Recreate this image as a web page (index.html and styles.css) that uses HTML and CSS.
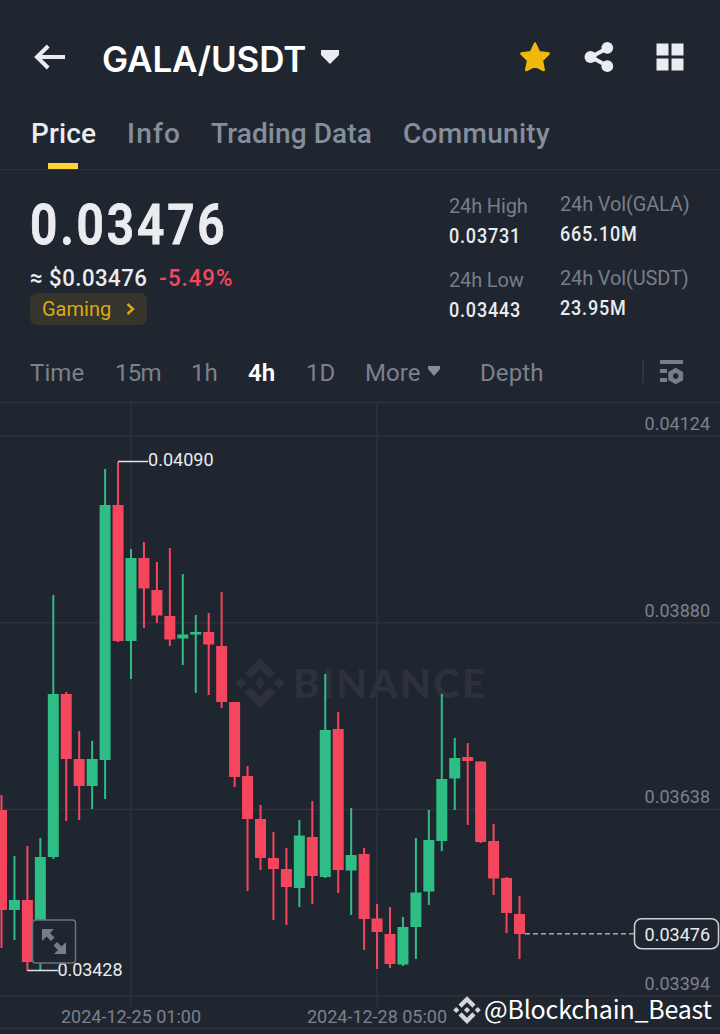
FILE: index.html
```html
<!DOCTYPE html>
<html lang="en">
<head>
<meta charset="utf-8">
<title>GALA/USDT</title>
<link rel="stylesheet" href="styles.css">
</head>
<body>
<div class="app">
  <header class="topbar">
    <svg class="back" width="32" height="26" viewBox="0 0 32 26"><path d="M14.2 2 3 13l11.2 11M3 13h28" fill="none" stroke="#eaecef" stroke-width="4"/></svg>
    <h1 class="pair">GALA/USDT</h1>
    <svg class="caret" width="20" height="16" viewBox="0 0 20 16"><path d="M1 1h18v5l-9 9-9-9z" fill="#eaecef"/></svg>
    <div class="actions">
      <svg width="32" height="32" viewBox="0 0 32 32"><path d="M16 2.7 20 11.3 29.6 12.6 22.8 19.4 24.7 29 16 24.7 7.3 29 9.2 19.4 2.4 12.6 12 11.3z" fill="#f0b90b" stroke="#f0b90b" stroke-width="2.6" stroke-linejoin="round"/></svg>
      <svg width="32" height="32" viewBox="0 0 32 32"><path d="M24.5 7 8 16l16.500 9" fill="none" stroke="#eaecef" stroke-width="4"/><g fill="#eaecef"><circle cx="24.300" cy="6.800" r="5.900"/><circle cx="7.500" cy="16" r="6"/><circle cx="24.300" cy="25.200" r="5.900"/></g></svg>
      <svg width="28" height="28" viewBox="0 0 28 28"><path d="M.5.5h12v12H.5zM15.500.5h12v12h-12zM.5 15.500h12v12H.5zM15.500 15.500h12v12h-12z" fill="#eaecef"/></svg>
    </div>
  </header>
  <nav class="tabs">
    <span class="tab tab-price active">Price</span>
    <span class="tab tab-info">Info</span>
    <span class="tab tab-data">Trading Data</span>
    <span class="tab tab-comm">Community</span>
  </nav>
  <section class="summary">
    <div class="quote">
      <div class="last">0.03476</div>
      <div class="fiat"><span class="usd">≈ $0.03476</span><span class="change">-5.49%</span></div>
      <div class="tag"><span>Gaming</span><svg width="10" height="12" viewBox="0 0 10 12"><path d="M1.500 1 7 6l-5.500 5" fill="none" stroke="#d9aa12" stroke-width="2.400"/></svg></div>
    </div>
    <div class="stats stats-a">
      <div class="label l-high">24h High</div><div class="value">0.03731</div>
      <div class="label l-low">24h Low</div><div class="value">0.03443</div>
    </div>
    <div class="stats stats-b">
      <div class="label l-vg">24h Vol(GALA)</div><div class="value">665.10M</div>
      <div class="label l-vu">24h Vol(USDT)</div><div class="value">23.95M</div>
    </div>
  </section>
  <nav class="ranges">
    <span class="r-time">Time</span>
    <span class="r-15">15m</span>
    <span class="r-1h">1h</span>
    <span class="r-4h on">4h</span>
    <span class="r-1d">1D</span>
    <span class="r-more">More<svg width="14" height="12" viewBox="0 0 14 12"><path d="M1 1h12v3L7 11 1 4z" fill="#848e9c"/></svg></span>
    <span class="r-depth">Depth</span>
    <svg class="settings" width="50" height="30" viewBox="0 0 50 30"><path d="M1 2v24" stroke="#363c47" stroke-width="1.500"/><g fill="#777d8a"><path d="M18 3h23v4H18zM18 12h7v4h-7zM18 21h7v4h-7z"/><path fill-rule="evenodd" d="m33.700 10.800 7.400 4.200v8.200l-7.400 4.100-7.400-4.100V15zM33.700 16.300a2.800 2.800 0 1 0 .01 0z"/></g></svg>
  </nav>
  <main class="chart">
    <svg id="plot" width="720" height="631" viewBox="0 403 720 631">
      <g class="grid"><path d="M0 402.500H720M0 436H720M0 622.700H720M0 809.500H720M0 996H720M0 1028.500H720M131 403V1007M376.900 403V1007"/></g>
      <g class="watermark">
        <g transform="translate(260 683)"><path d="m0-25 15.300 15.200-5.500 5.600L0-14.100l-9.800 9.900-5.500-5.600zM0 25l15.300-15.200-5.500-5.600L0 14.100l-9.800-9.900-5.500 5.600zM0-5.500 5.500 0 0 5.500-5.500 0zM-19.400-5.500-13.900 0l-5.500 5.500L-24.900 0zM19.400-5.500 24.900 0l-5.500 5.500L13.900 0z"/></g>
        <text x="293" y="697.500" textLength="192">BINANCE</text>
      </g>
      <g id="candles"></g>
      <path class="leader" d="M118 461.500H148M27.500 970.500H58"/>
      <path class="lastline" d="M525 933.700H634"/>
      <g class="marks"><text x="148" y="466" textLength="65.500">0.04090</text><text x="57.500" y="976" textLength="65">0.03428</text></g>
      <g class="axis">
        <text x="644.500" y="430" textLength="65.500">0.04124</text>
        <text x="644.500" y="617" textLength="65.500">0.03880</text>
        <text x="644.500" y="803" textLength="65.500">0.03638</text>
        <text x="644.500" y="990" textLength="65.500">0.03394</text>
        <text x="61" y="1023" textLength="140">2024-12-25 01:00</text>
        <text x="307" y="1023" textLength="140">2024-12-28 05:00</text>
      </g>
      <rect class="pricebox" x="634.500" y="918.700" width="84" height="30" rx="7"/>
      <g class="marks"><text x="644.500" y="941" textLength="65.500">0.03476</text></g>
      <g class="expand"><rect x="32.500" y="920" width="43" height="43" rx="3"/><path d="M42 929h12l-4 4 4.500 4.500-3.500 3.500-4.500-4.500L42 941zM66 954V942l-4.500 4.500L57 942l-3.500 3.500 4.500 4.500-4 4z"/></g>
      <g class="credit"><path transform="translate(467 1010) scale(.555)" d="m0-25 15.300 15.200-5.500 5.600L0-14.100l-9.800 9.900-5.500-5.600zM0 25l15.300-15.200-5.500-5.600L0 14.100l-9.800-9.900-5.500 5.600zM0-5.500 5.500 0 0 5.500-5.500 0zM-19.400-5.500-13.900 0l-5.500 5.500L-24.900 0zM19.400-5.500 24.900 0l-5.500 5.500L13.900 0z"/><text x="484" y="1019" textLength="228">@Blockchain_Beast</text></g>
    </svg>
  </main>
</div>
<script src="chart.js"></script>
</body>
</html>
```
FILE: styles.css
```css
* { box-sizing: border-box; }
body { margin: 0; background: #202630; }
.app { width: 720px; height: 1034px; overflow: hidden; background: #202630; color: #eaecef; font-family: Roboto, "Liberation Sans", sans-serif; display: flex; flex-direction: column; }
svg { display: block; flex: none; }
span { white-space: nowrap; }
.topbar { height: 112px; padding: 2px 36px 0 34px; display: flex; align-items: center; }
.back { margin-right: 36px; }
.pair { margin: 3px 0 0; width: 218px; font: 600 35px/44px Inter, sans-serif; letter-spacing: -0.15px; color: #fff; white-space: nowrap; }
.actions { margin-left: auto; display: flex; align-items: center; gap: 32px; }
.actions svg:last-child { margin-left: 9px; }
.tabs { height: 58px; border-bottom: 1px solid #2d333e; padding-left: 31px; display: flex; font: 500 28px/44px Roboto, sans-serif; color: #848e9c; }
.tab { position: relative; }
.tab-price { width: 96px; letter-spacing: .1px; }
.tab-info { width: 84px; letter-spacing: 1.2px; }
.tab-data { width: 192px; letter-spacing: .1px; }
.tab-comm { letter-spacing: .3px; }
.active { color: #eaecef; }
.active::after { content: ""; position: absolute; left: 17px; top: 51px; width: 30px; height: 6px; background: #fcd535; }
.summary { height: 172px; padding-left: 30px; display: flex; }
.quote { width: 419px; padding-top: 27px; }
.last { font-size: 56px; line-height: 56px; font-weight: 600; letter-spacing: 3.3px; transform: scaleX(.855); transform-origin: left; -webkit-text-stroke: .9px #eaecef; }
.fiat { display: flex; gap: 13px; height: 31px; margin-top: 9px; font-size: 24px; line-height: 32px; font-weight: 500; letter-spacing: .5px; transform: scaleX(.925); transform-origin: left; }
.change { color: #f6465d; letter-spacing: 1.100px; }
.tag { width: 117px; height: 32px; border-radius: 7px; background: #35342d; color: #d9aa12; padding: 0 11px 0 12px; display: flex; align-items: center; justify-content: space-between; font-size: 20px; }
.stats-a { width: 111px; padding-top: 23px; }
.stats-b { padding-top: 21px; }
.label { font-size: 20px; line-height: 26px; letter-spacing: -.15px; color: #777e8b; white-space: nowrap; }
.value { font-size: 20px; line-height: 34px; height: 32px; font-weight: 500; letter-spacing: .9px; margin-bottom: 16px; transform: scaleX(.9); transform-origin: left; }
.ranges { height: 61px; padding-left: 30px; display: flex; font-size: 24px; line-height: 62px; color: #7b818e; letter-spacing: .1px; }
.r-time { width: 85px; }
.r-15 { width: 76px; letter-spacing: -.8px; }
.r-1h { width: 57px; }
.r-4h { width: 58px; }
.r-1d { width: 59px; }
.r-more { width: 115px; display: flex; gap: 6px; }
.r-more svg { margin-top: 23px; }
.r-depth { width: 162px; }
.on { color: #fff; font-weight: 600; }
.settings { margin-top: 15px; }
.chart { height: 631px; }
#plot { overflow: visible; }
.grid { stroke: #2d323d; stroke-width: 1.500; fill: none; }
.watermark { fill: #2d313c; font: 900 40px Lato, Inter, sans-serif; }
.leader { stroke: #dfe1e5; stroke-width: 1.500; }
.lastline { stroke: #a5a9b1; stroke-width: 1.500; stroke-dasharray: 5 3; }
.marks { fill: #eaecef; font-size: 18px; }
.axis { fill: #7b818e; font-size: 18px; }
.pricebox { fill: #202630; stroke: #cdd0d5; stroke-width: 1.500; }
.expand rect { fill: #202630; stroke: #6b717d; stroke-width: 1.500; }
.expand path { fill: #777d8a; }
.credit path { fill: #d6d6d6; }
.credit text { fill: #fff; font: 400 25px "Noto Sans CJK SC", sans-serif; }
.up { fill: #2ebd85; }
.down { fill: #f6465d; }
```
FILE: chart.js
```js
// direction, high, body top, body bottom, low
const candles = [
  ["d",795,810,910,948],["u",856,900,910,940],["d",846,900,962,971],["u",838,857,962,970],
  ["u",595,694,857,859],["d",692,694,759,821],["d",731,759,786,820],["u",741,759,786,809],
  ["u",469,505,760,799],["d",462,505,641,642],["u",549,558,641,679],["d",542,558,588.5,628],
  ["d",562,590,615.5,623],["d",548,616,639.5,646],["u",574,634.5,638.5,665],["u",615,632,634.5,693],
  ["d",613,632,644.5,695],["d",592,646,702,708],["d",702,702,777,787],["d",766,776,819,891],
  ["d",805,819,858,870],["d",832,858,869,920],["d",848,869,887,925],["u",820,835.5,888,907],
  ["d",801,837,876,904],["u",674,730,877,878],["d",712,729,870,893],["u",808,855,870.5,915],
  ["d",848,854,919,950],["d",904,918.5,932,969],["d",907,934,964,968],["u",917,927,964.5,966],
  ["u",838,892.5,927,959],["u",810,840,891.5,905],["u",694,779,841,851],["u",738,758,778.5,810],
  ["d",743,757,761,825],["d",761.5,761.5,842,843],["d",824,841,878.5,895],["d",877,878,913,933],
  ["d",896,914,934,959]
];
const ns = "http://www.w3.org/2000/svg";
const layer = document.getElementById("candles");
function bar(x, y, w, h, cls) {
  const r = document.createElementNS(ns, "rect");
  r.setAttribute("x", x); r.setAttribute("y", y);
  r.setAttribute("width", w); r.setAttribute("height", h);
  r.setAttribute("class", cls);
  layer.appendChild(r);
}
candles.forEach(([dir, hi, top, bottom, lo], i) => {
  const cx = 1.5 + i * 12.95;
  const cls = dir === "u" ? "up" : "down";
  bar(cx - 1, hi, 2, lo - hi, cls);
  bar(cx - 5.5, top, 11, bottom - top, cls);
});
```
